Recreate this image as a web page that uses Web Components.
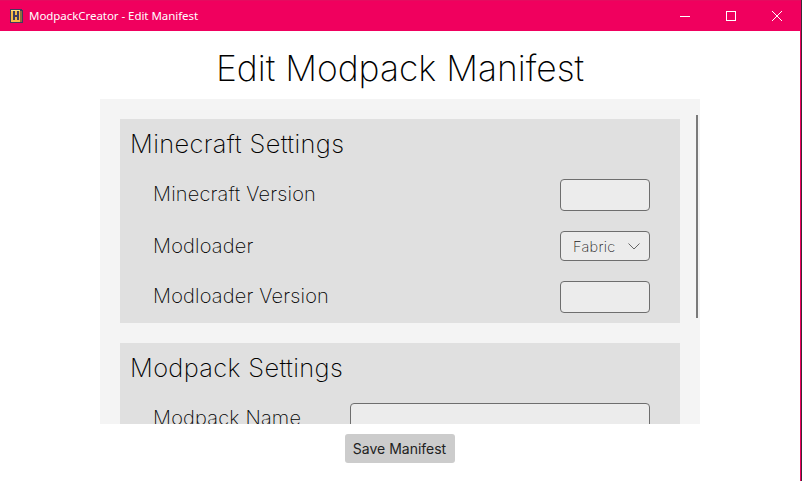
<!DOCTYPE html>
<html><head><meta charset="utf-8"><style>
html,body{margin:0;padding:0;height:100%;overflow:hidden;background:#fff}
body{font-family:Inter,"Liberation Sans",sans-serif}
</style></head><body>
<app-window>
  <page-title>Edit Modpack Manifest</page-title>
  <scroll-panel>
    <settings-card heading="Minecraft Settings">
      <setting-row label="Minecraft Version" h="50"><text-box w="90"></text-box></setting-row>
      <setting-row label="Modloader" h="54"><drop-down value="Fabric"></drop-down></setting-row>
      <setting-row label="Modloader Version" h="46"><text-box w="90"></text-box></setting-row>
    </settings-card>
    <settings-card heading="Modpack Settings">
      <setting-row label="Modpack Name" h="50"><text-box w="300"></text-box></setting-row>
    </settings-card>
  </scroll-panel>
  <save-button>Save Manifest</save-button>
</app-window>
<script>
function def(name,css,html){
  customElements.define(name,class extends HTMLElement{
    connectedCallback(){
      if(this.shadowRoot)return;
      const r=this.attachShadow({mode:'open'});
      r.innerHTML='<style>'+css+'</style>'+(typeof html==='function'?html(this):html);
    }
  });
}
def('title-bar',`:host{display:flex;align-items:center;height:31px;background:#f0005e;color:#fff;flex:none;box-sizing:border-box;border-top:1px solid #e60a5f}
.ic{width:16px;height:16px;margin:0 4px 0 8px;flex:none}
.t{font:11.5px "Noto Sans","Open Sans",sans-serif;flex:1;margin-left:1px;margin-top:-1px;letter-spacing:-.05px}
.b{width:46px;height:30px;display:flex;align-items:center;justify-content:center}
.b svg{width:12px;height:12px;display:block}`,
`<svg class="ic" viewBox="0 0 16 16" shape-rendering="crispEdges"><path d="M2 1h11l2 2v12H2z" fill="#3f3a5e"/><rect x="3" y="3" width="9" height="11" fill="#f6bb45"/><rect x="3" y="2" width="9" height="1" fill="#fbe08a"/><rect x="12" y="3" width="2" height="11" fill="#8a6f3f"/><rect x="5" y="3" width="2" height="9" fill="#3f3a5e"/><rect x="9" y="3" width="2" height="9" fill="#3f3a5e"/><rect x="7" y="7" width="2" height="2" fill="#3f3a5e"/></svg>
<span class="t">ModpackCreator - Edit Manifest</span>
<span class="b"><svg viewBox="0 0 12 12"><rect x="1" y="6" width="10" height="1" fill="#fff"/></svg></span>
<span class="b"><svg viewBox="0 0 12 12"><rect x="1.5" y="1.5" width="9" height="9" fill="none" stroke="#fff"/></svg></span>
<span class="b"><svg viewBox="0 0 12 12"><path d="M1 1L11 11M11 1L1 11" stroke="#fff" stroke-width="1" fill="none"/></svg></span>`);
def('app-window',`:host{display:flex;flex-direction:column;width:802px;height:481px;box-sizing:border-box;border-right:1px solid #3a2a38;background:#fff;color:#000;font-family:Inter,sans-serif;font-optical-sizing:none;overflow:hidden}
.w{flex:1;display:flex;flex-direction:column;min-height:0;border-right:1px solid #f0005e}
.m{flex:1;display:flex;flex-direction:column;align-items:center;min-height:0}`,
`<div class="w"><title-bar></title-bar><div class="m"><slot></slot></div></div>`);
def('page-title',`:host{display:block;font-size:35.4px;font-weight:200;line-height:44px;margin-top:16px;margin-bottom:8px;flex:none}`,'<slot></slot>');
def('scroll-panel',`:host{display:block;position:relative;width:600px;height:325px;background:#f4f4f4;overflow:hidden;flex:none}
.c{display:flex;flex-direction:column;gap:20px;padding:20px 20px 0}
.s{position:absolute;right:2px;top:16px;width:2px;height:203px;background:#7a7a7a}`,'<div class="c"><slot></slot></div><div class="s"></div>');
def('settings-card',`:host{display:block;background:#e0e0e0;padding:0 10px;height:204px;overflow:hidden;flex:none;box-sizing:border-box}
h2{margin:0;font-size:25.4px;font-weight:250;line-height:29px;padding-top:10px;padding-bottom:11px;letter-spacing:.35px}
.r{display:flex;flex-direction:column}`,el=>`<h2>${el.getAttribute('heading')}</h2><div class="r"><slot></slot></div>`);
def('setting-row',`:host{display:flex;align-items:center;justify-content:space-between;box-sizing:border-box;padding:0 20px 0 23px;font-size:20px;font-weight:250;letter-spacing:.18px;flex:none}`,
el=>{el.style.height=el.getAttribute('h')+'px';return `<span>${el.getAttribute('label')}</span><slot></slot>`;});
def('text-box',`:host{display:block;box-sizing:border-box;height:32px;margin-top:2px;background:#ececec;border:1px solid #6e6e6e;border-radius:4px;flex:none}`,
el=>{el.style.width=el.getAttribute('w')+'px';return '';});
def('drop-down',`:host{display:flex;align-items:center;justify-content:space-between;box-sizing:border-box;width:90px;height:30px;background:#ececec;border:1px solid #6e6e6e;border-radius:4px;padding:0 9px 0 12px;font-size:14.5px;font-weight:250;letter-spacing:.3px;color:#222;flex:none}
svg{width:12px;height:7px;display:block}`,el=>`<span>${el.getAttribute('value')}</span><svg viewBox="0 0 12 7"><path d="M.5.5L6 6l5.5-5.5" fill="none" stroke="#666" stroke-width="1"/></svg>`);
def('save-button',`:host{display:flex;align-items:center;justify-content:center;box-sizing:border-box;width:110px;height:29px;margin-top:10px;margin-right:1px;background:#ccc;border-radius:3px;font-size:14px;font-weight:400;color:#222;flex:none}`,'<slot></slot>');
</script>
</body></html>
